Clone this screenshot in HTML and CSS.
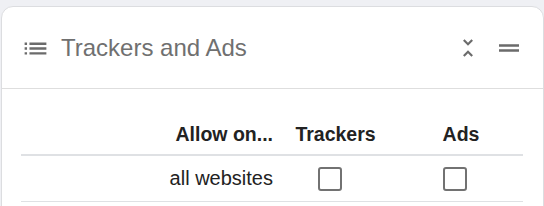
FILE: index.html
```html
<!DOCTYPE html>
<html>
<head>
<meta charset="utf-8">
<link rel="stylesheet" href="styles.css">
</head>
<body>
<div class="page">
  <section class="card">
    <header class="card-header">
      <svg class="icon-list" viewBox="0 0 24 24"><path d="M3 13h2v-2H3v2zm0 4h2v-2H3v2zm0-8h2V7H3v2zm4 4h14v-2H7v2zm0 4h14v-2H7v2zM7 7v2h14V7H7z"/></svg>
      <h2 class="card-title">Trackers and Ads</h2>
      <div class="actions">
        <svg class="icon-unfold" viewBox="0 0 24 24"><path d="M7.41 18.59L8.83 20 12 16.83 15.17 20l1.41-1.41L12 14l-4.59 4.59zm9.18-13.18L15.17 4 12 7.17 8.83 4 7.41 5.41 12 10l4.59-4.59z"/></svg>
        <svg class="icon-drag" viewBox="0 0 24 24"><path d="M20 9H4v2h16V9zM4 15h16v-2H4v2z"/></svg>
      </div>
    </header>
    <div class="card-body">
      <div class="grid">
        <div class="th col-label">Allow on...</div>
        <div class="th col-trackers">Trackers</div>
        <div class="th col-ads">Ads</div>
        <div class="td col-label">all websites</div>
        <div class="td col-trackers"><input type="checkbox" class="box"></div>
        <div class="td col-ads"><input type="checkbox" class="box"></div>
      </div>
    </div>
  </section>
</div>
</body>
</html>
```

FILE: styles.css
```css
html, body {
  margin: 0;
  padding: 0;
}
body {
  background: #eff0f4;
  font-family: "Liberation Sans", Arial, sans-serif;
}
.page {
  padding: 6px 0 0 1px;
  height: 200px;
  overflow: hidden;
}
.card {
  background: #fff;
  border: 1px solid #dcdde0;
  border-radius: 12px 12px 0 0;
  height: 230px;
}
.card-header {
  display: flex;
  align-items: center;
  height: 81px;
  padding: 0 19px 0 19px;
  border-bottom: 1px solid #dedede;
}
.icon-list {
  width: 29px;
  height: 29px;
  fill: #6b6b6b;
  margin-top: 2px;
  flex: none;
}
.card-title {
  margin: 0 0 0 11px;
  font-weight: normal;
  font-size: 24px;
  line-height: 28px;
  color: #707070;
  flex: 1;
}
.actions {
  display: flex;
  align-items: center;
  gap: 13px;
}
.icon-unfold {
  width: 26px;
  height: 26px;
  fill: #6b6b6b;
  margin-top: 1px;
}
.icon-drag {
  width: 30px;
  height: 30px;
  fill: #6b6b6b;
}
.card-body {
  padding: 20px 20px 0 19px;
}
.grid {
  display: grid;
  grid-template-columns: 260px 97px 1fr;
  line-height: 23px;
  color: #222;
}
.th {
  font-weight: bold;
  font-size: 19.5px;
  padding: 14px 0 8px 0;
  border-bottom: 2px solid #dfe1e4;
}
.td {
  font-size: 20px;
  height: 45px;
  display: flex;
  align-items: center;
  border-bottom: 1px solid #dfe1e4;
}
.th.col-label {
  text-align: right;
  padding-right: 8px;
}
.td.col-label {
  justify-content: flex-end;
  padding-right: 8px;
}
.th.col-trackers {
  text-align: center;
  padding-left: 12px;
}
.td.col-trackers {
  justify-content: center;
}
.th.col-ads {
  text-align: center;
  padding-left: 21px;
}
.td.col-ads {
  justify-content: center;
  padding-left: 9px;
}
.box {
  appearance: none;
  -webkit-appearance: none;
  margin: 0;
  width: 24px;
  height: 24px;
  border: 2px solid #727272;
  border-radius: 3px;
  background: #fff;
}
```
